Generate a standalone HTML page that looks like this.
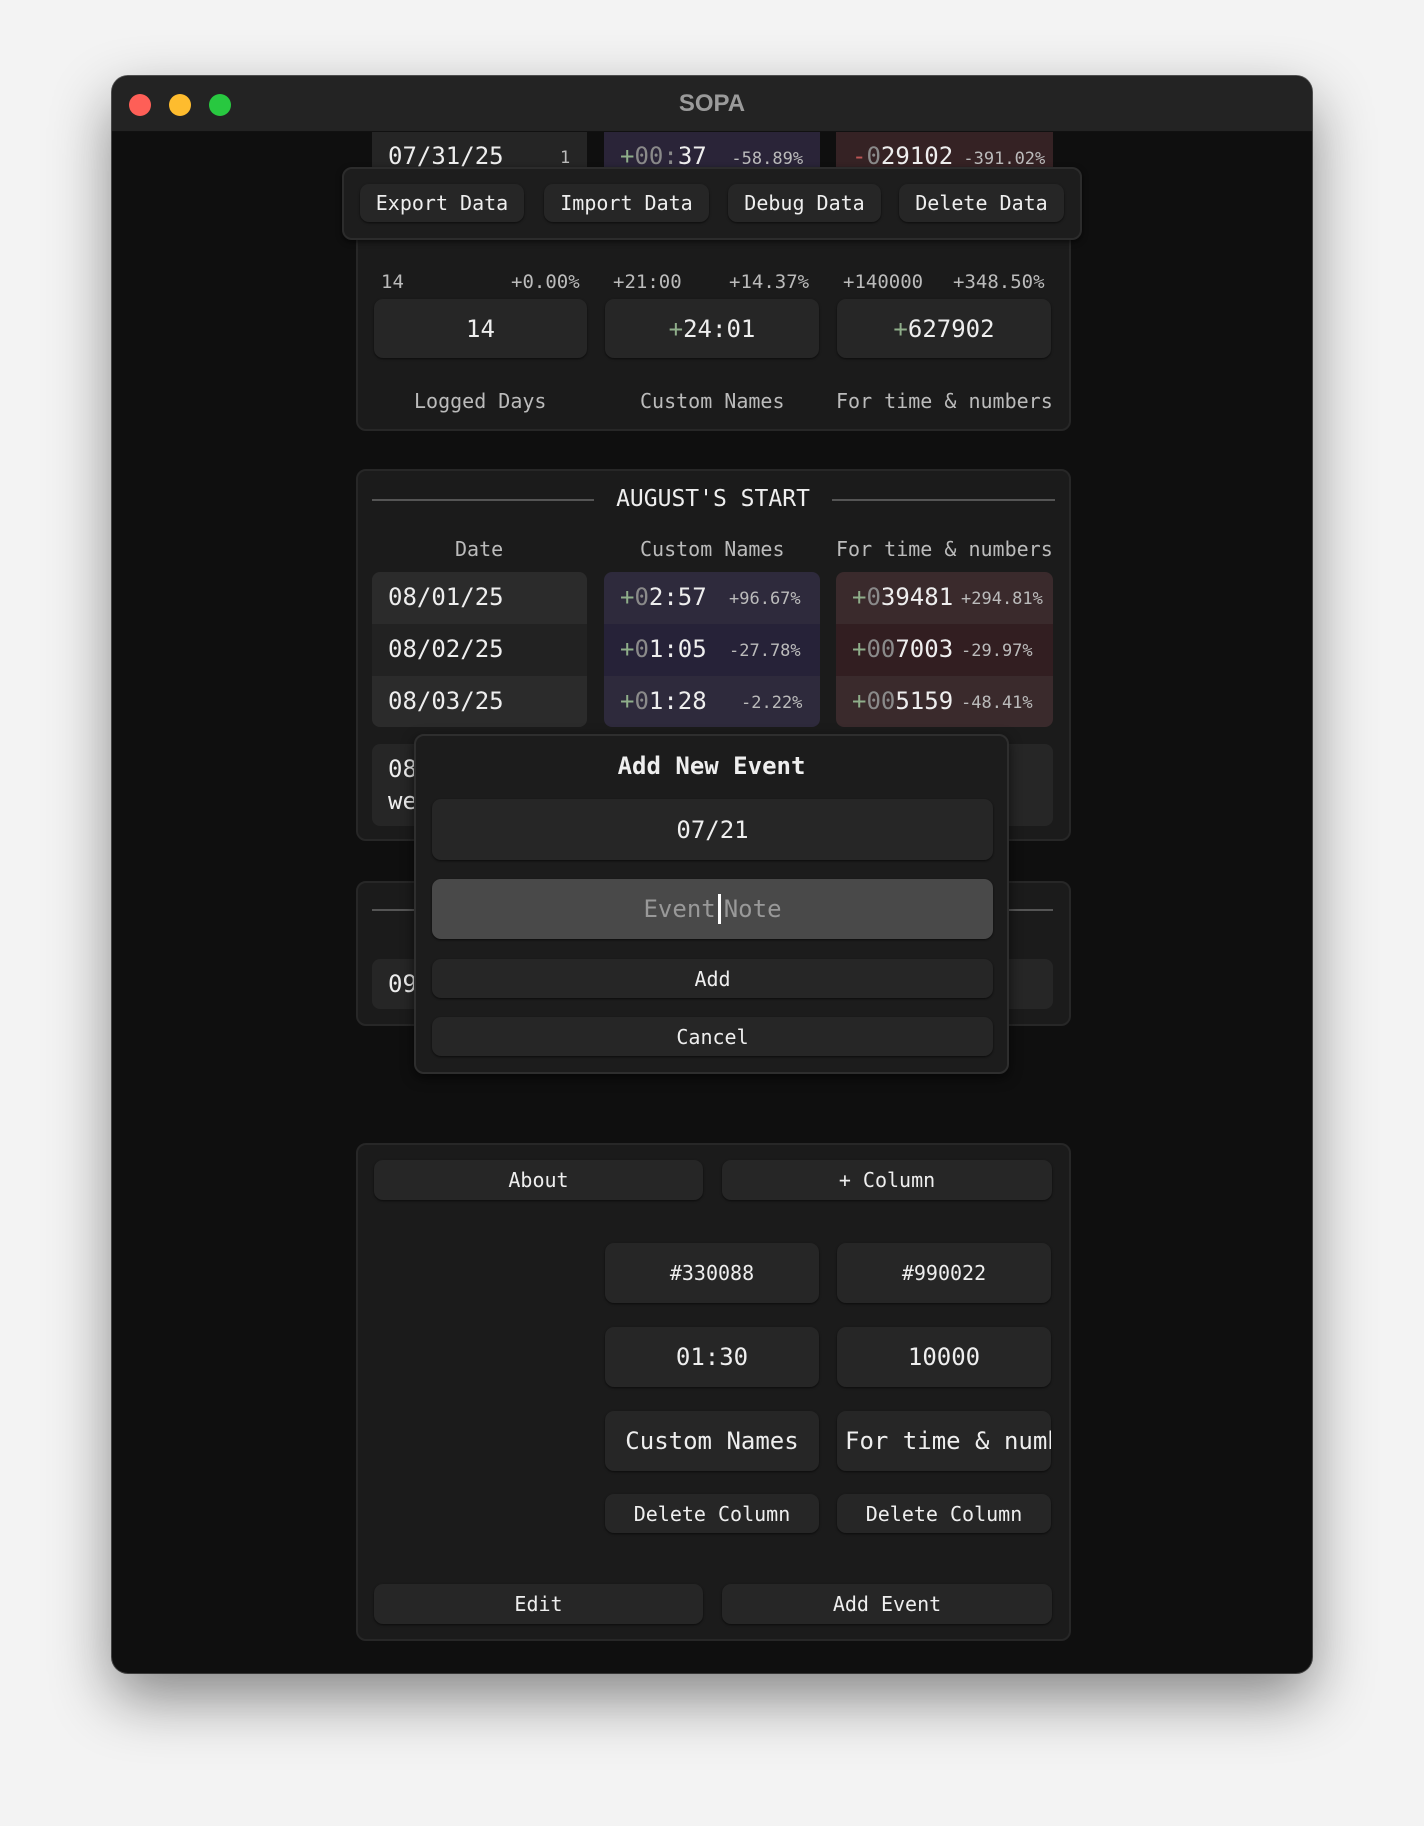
<!DOCTYPE html>
<html><head><meta charset="utf-8"><style>
*{box-sizing:border-box;margin:0;padding:0}
body{width:1424px;height:1826px;background:#f3f3f3;position:relative;overflow:hidden;font-family:"DejaVu Sans Mono","Liberation Mono",monospace;color:#eee}
.win{position:absolute;left:112px;top:76px;width:1200px;height:1597px;background:#0f0f0f;border-radius:16px;overflow:hidden;box-shadow:0 25px 60px rgba(0,0,0,.45),0 0 0 1px #555}
.a{position:absolute}
.b{position:absolute;display:flex;align-items:center;justify-content:center;background:#262626;border-radius:9px;box-shadow:0 1px 2px rgba(0,0,0,.6);white-space:nowrap;overflow:hidden}
.sec{position:absolute;background:#1b1b1b;border:2px solid #272727;border-radius:10px}
.t{position:absolute;white-space:nowrap}
.g{color:#8fae8a}.d{color:#8a8a8a}
</style></head><body>
<div class="win">
<div class="a" style="left:260px;top:56px;width:215px;height:55px;background:#252525"></div>
<div class="a" style="left:492px;top:56px;width:216px;height:55px;background:#2a2438"></div>
<div class="a" style="left:724px;top:56px;width:217px;height:55px;background:#352224"></div>
<div class="t" style="left:276px;top:66px;font-size:24px">07/31/25</div>
<div class="t" style="left:448px;top:72px;font-size:17px;color:#bbb">1</div>
<div class="t" style="left:508px;top:66px;font-size:24px"><span class="g">+</span><span class="d">00:</span>37 <span style="font-size:17px;color:#bbb">&nbsp;-58.89%</span></div>
<div class="t" style="left:740px;top:66px;font-size:24px"><span style="color:#b55">-</span><span class="d">0</span>29102<span style="font-size:17px;color:#bbb"> -391.02%</span></div>
<!-- summary section -->
<div class="sec" style="left:244px;top:150px;width:715px;height:205px"></div>
<div class="t" style="left:269px;top:195px;font-size:19px;color:#bbb">14</div>
<div class="t" style="left:399px;top:195px;font-size:19px;color:#bbb">+0.00%</div>
<div class="t" style="left:501px;top:195px;font-size:19px;color:#bbb">+21:00</div>
<div class="t" style="left:617px;top:195px;font-size:19px;color:#bbb">+14.37%</div>
<div class="t" style="left:731px;top:195px;font-size:19px;color:#bbb">+140000</div>
<div class="t" style="left:841px;top:195px;font-size:19px;color:#bbb">+348.50%</div>
<div class="b" style="left:262px;top:223px;width:213px;height:59px;font-size:24px">14</div>
<div class="b" style="left:493px;top:223px;width:214px;height:59px;font-size:24px"><span class="g">+</span>24:01</div>
<div class="b" style="left:725px;top:223px;width:214px;height:59px;font-size:24px"><span class="g">+</span>627902</div>
<div class="t" style="left:302px;top:313px;font-size:20px;color:#bbb">Logged Days</div>
<div class="t" style="left:528px;top:313px;font-size:20px;color:#bbb">Custom Names</div>
<div class="t" style="left:724px;top:313px;font-size:20px;color:#bbb">For time &amp; numbers</div>
<!-- toolbar -->
<div class="a" style="left:230px;top:91px;width:740px;height:73px;background:#1d1d1d;border:2px solid #2c2c2c;border-radius:10px;box-shadow:0 2px 6px rgba(0,0,0,.6)"></div>
<div class="b" style="left:248px;top:108px;width:164px;height:38px;font-size:20px">Export Data</div>
<div class="b" style="left:432px;top:108px;width:165px;height:38px;font-size:20px">Import Data</div>
<div class="b" style="left:616px;top:108px;width:153px;height:38px;font-size:20px">Debug Data</div>
<div class="b" style="left:787px;top:108px;width:165px;height:38px;font-size:20px">Delete Data</div>
<!-- August section -->
<div class="sec" style="left:244px;top:393px;width:715px;height:372px"></div>
<div class="a" style="left:260px;top:423px;width:222px;height:2px;background:#555"></div>
<div class="a" style="left:720px;top:423px;width:223px;height:2px;background:#555"></div>
<div class="t" style="left:501px;top:410px;font-size:23px;width:200px;text-align:center">AUGUST'S START</div>
<div class="t" style="left:343px;top:461px;font-size:20px;color:#bbb">Date</div>
<div class="t" style="left:528px;top:461px;font-size:20px;color:#bbb">Custom Names</div>
<div class="t" style="left:724px;top:461px;font-size:20px;color:#bbb">For time &amp; numbers</div>
<div class="a" style="left:260px;top:496px;width:215px;height:155px;background:#232323;border-radius:8px;overflow:hidden"><div style="height:52px;background:#2b2b2b"></div><div style="height:52px;background:#222"></div><div style="height:51px;background:#2b2b2b"></div></div>
<div class="a" style="left:492px;top:496px;width:216px;height:155px;border-radius:8px;overflow:hidden"><div style="height:52px;background:#2e2a3c"></div><div style="height:52px;background:#262238"></div><div style="height:51px;background:#2e2a3c"></div></div>
<div class="a" style="left:724px;top:496px;width:217px;height:155px;border-radius:8px;overflow:hidden"><div style="height:52px;background:#3a2a2c"></div><div style="height:52px;background:#321e21"></div><div style="height:51px;background:#3a2a2c"></div></div>
<div class="t" style="left:276px;top:507px;font-size:24px">08/01/25</div>
<div class="t" style="left:276px;top:559px;font-size:24px">08/02/25</div>
<div class="t" style="left:276px;top:611px;font-size:24px">08/03/25</div>
<div class="t" style="left:508px;top:507px;font-size:24px"><span class="g">+</span><span class="d">0</span>2:57</div>
<div class="t" style="left:508px;top:559px;font-size:24px"><span class="g">+</span><span class="d">0</span>1:05</div>
<div class="t" style="left:508px;top:611px;font-size:24px"><span class="g">+</span><span class="d">0</span>1:28</div>
<div class="t" style="left:617px;top:513px;font-size:17px;color:#bbb">+96.67%</div>
<div class="t" style="left:617px;top:565px;font-size:17px;color:#bbb">-27.78%</div>
<div class="t" style="left:629px;top:617px;font-size:17px;color:#bbb">-2.22%</div>
<div class="t" style="left:740px;top:507px;font-size:24px"><span class="g">+</span><span class="d">0</span>39481</div>
<div class="t" style="left:740px;top:559px;font-size:24px"><span class="g">+</span><span class="d">00</span>7003</div>
<div class="t" style="left:740px;top:611px;font-size:24px"><span class="g">+</span><span class="d">00</span>5159</div>
<div class="t" style="left:849px;top:513px;font-size:17px;color:#bbb">+294.81%</div>
<div class="t" style="left:849px;top:565px;font-size:17px;color:#bbb">-29.97%</div>
<div class="t" style="left:849px;top:617px;font-size:17px;color:#bbb">-48.41%</div>
<div class="a" style="left:260px;top:668px;width:681px;height:82px;background:#262626;border-radius:8px"></div>
<div class="t" style="left:276px;top:677px;font-size:24px;line-height:32px">08<br>we</div>
<!-- third section -->
<div class="sec" style="left:244px;top:805px;width:715px;height:145px"></div>
<div class="a" style="left:260px;top:833px;width:681px;height:2px;background:#555"></div>
<div class="a" style="left:260px;top:883px;width:681px;height:50px;background:#262626;border-radius:8px"></div>
<div class="t" style="left:276px;top:894px;font-size:24px">09</div>
<!-- modal -->
<div class="a" style="left:302px;top:658px;width:595px;height:340px;background:#1c1c1c;border:2px solid #2e2e2e;border-radius:10px;box-shadow:0 4px 12px rgba(0,0,0,.6)"></div>
<div class="t" style="left:302px;top:676px;width:595px;text-align:center;font-size:24px;font-weight:bold">Add New Event</div>
<div class="b" style="left:320px;top:723px;width:561px;height:61px;font-size:24px">07/21</div>
<div class="b" style="left:320px;top:803px;width:561px;height:60px;font-size:24px;background:#494949;color:#999">Event<span style="display:inline-block;width:3px;height:30px;background:#fff;margin:0 3px 0 2px"></span>Note</div>
<div class="b" style="left:320px;top:883px;width:561px;height:39px;font-size:20px">Add</div>
<div class="b" style="left:320px;top:941px;width:561px;height:39px;font-size:20px">Cancel</div>
<!-- bottom section -->
<div class="sec" style="left:244px;top:1067px;width:715px;height:498px"></div>
<div class="b" style="left:262px;top:1084px;width:329px;height:40px;font-size:20px">About</div>
<div class="b" style="left:610px;top:1084px;width:330px;height:40px;font-size:20px">+ Column</div>
<div class="b" style="left:493px;top:1167px;width:214px;height:60px;font-size:20px">#330088</div>
<div class="b" style="left:725px;top:1167px;width:214px;height:60px;font-size:20px">#990022</div>
<div class="b" style="left:493px;top:1251px;width:214px;height:60px;font-size:24px">01:30</div>
<div class="b" style="left:725px;top:1251px;width:214px;height:60px;font-size:24px">10000</div>
<div class="b" style="left:493px;top:1335px;width:214px;height:60px;font-size:24px">Custom Names</div>
<div class="b" style="left:725px;top:1335px;width:214px;height:60px;font-size:24px;justify-content:flex-start;padding-left:8px">For time &amp; numbers</div>
<div class="b" style="left:493px;top:1418px;width:214px;height:39px;font-size:20px">Delete Column</div>
<div class="b" style="left:725px;top:1418px;width:214px;height:39px;font-size:20px">Delete Column</div>
<div class="b" style="left:262px;top:1508px;width:329px;height:40px;font-size:20px">Edit</div>
<div class="b" style="left:610px;top:1508px;width:330px;height:40px;font-size:20px">Add Event</div>
<!-- title bar -->
<div class="a" style="left:0;top:0;width:1200px;height:56px;background:#232323;border-bottom:1px solid #111"></div>
<div class="a" style="left:17px;top:18px;width:22px;height:22px;border-radius:50%;background:#fe5f57"></div>
<div class="a" style="left:57px;top:18px;width:22px;height:22px;border-radius:50%;background:#febc2e"></div>
<div class="a" style="left:97px;top:18px;width:22px;height:22px;border-radius:50%;background:#28c840"></div>
<div class="t" style="left:0;top:14px;width:1200px;text-align:center;font-family:'Liberation Sans',sans-serif;font-weight:bold;font-size:24px;color:#9a9a9a">SOPA</div>
</div>
</body></html>
